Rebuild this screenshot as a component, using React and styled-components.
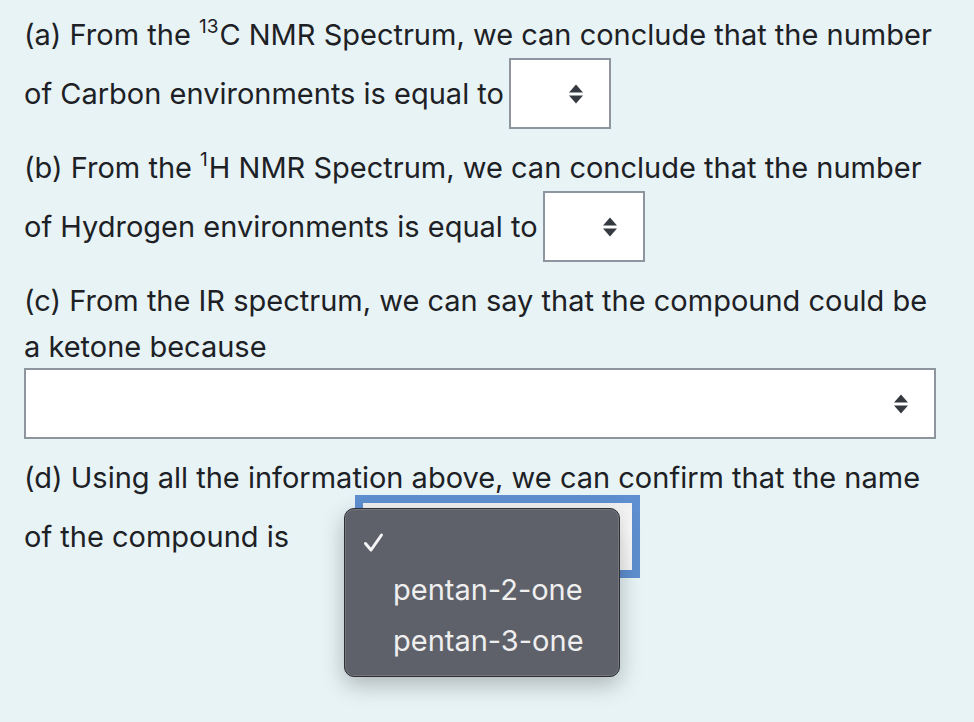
import styled, { createGlobalStyle } from "styled-components";

const GlobalStyle = createGlobalStyle`
  html, body {
    margin: 0;
    padding: 0;
    background: #e7f3f5;
  }
  * {
    box-sizing: border-box;
  }
`;

const Page = styled.div`
  min-height: 100vh;
  padding: 12px 30px 0 24px;
  background: #e7f3f5;
  color: #1d2125;
  font-family: Inter, "Noto Sans", "Liberation Sans", sans-serif;
  font-size: 29px;
`;

const Question = styled.div`
  margin-bottom: 16px;
`;

const Line = styled.div`
  position: relative;
  line-height: 46px;
  white-space: nowrap;
`;

const Sup = styled.sup`
  font-size: 19px;
  line-height: 0;
  vertical-align: 12px;
  margin-right: 1px;
`;

/* overflow hidden puts the inline-block baseline at its bottom edge */
const Combo = styled.div`
  display: ${(p) => (p.$block ? "block" : "inline-block")};
  overflow: hidden;
  vertical-align: -25px;
  width: ${(p) => (p.$block ? "912px" : `${p.$width}px`)};
  height: 71px;
  margin-left: ${(p) => p.$gap || 0}px;
  margin-top: ${(p) => (p.$block ? "-2px" : "0")};
  background: ${(p) =>
    p.$focused ? "linear-gradient(#f1f1f1, #fdfdfd 40%, #f6f6f6)" : "#fff"};
  border: 2px solid ${(p) => (p.$focused ? "#5f8fd0" : "#8f959e")};
  box-shadow: ${(p) => (p.$focused ? "0 0 0 6px #5f8fd0" : "none")};
`;

const Track = styled.div`
  display: flex;
  align-items: center;
  justify-content: flex-end;
  height: 100%;
  padding-right: 25px;
`;

const Arrows = styled.svg`
  display: block;
  width: 16px;
  height: 20px;
`;

const Menu = styled.div`
  position: absolute;
  left: 320px;
  top: 7px;
  width: 276px;
  padding: 9px 0 12px;
  background: #5e6169;
  border: 1px solid #2e2f33;
  border-radius: 10px;
  box-shadow: inset 0 0 0 1px rgba(255, 255, 255, 0.14),
    0 8px 22px rgba(0, 0, 0, 0.25);
  z-index: 5;
`;

const MenuItem = styled.div`
  display: flex;
  align-items: center;
  height: ${(p) => (p.$last ? 50 : 48)}px;
  padding-left: 48px;
  padding-top: ${(p) => (p.$last ? 4 : 0)}px;
  position: relative;
  color: #efeff0;
  font-size: 29px;
  line-height: 46px;
`;

const Check = styled.svg`
  position: absolute;
  left: 18px;
  top: 14px;
  width: 21px;
  height: 21px;
`;

const SelectArrows = () => (
  <Arrows viewBox="0 0 16 20">
    <polygon points="1,8.5 8,0.5 15,8.5" fill="#343a40" />
    <polygon points="1,11.5 15,11.5 8,19.5" fill="#343a40" />
  </Arrows>
);

const Select = ({ width, gap, block, focused }) => (
  <Combo $width={width} $gap={gap} $block={block} $focused={focused}>
    <Track>{!focused && <SelectArrows />}</Track>
  </Combo>
);

export default function App() {
  return (
    <>
      <GlobalStyle />
      <Page>
        <Question>
          <Line>
            (a) From the <Sup>13</Sup>C NMR Spectrum, we can conclude that the number
          </Line>
          <Line>
            of Carbon environments is equal to
            <Select width={102} gap={5} />
          </Line>
        </Question>

        <Question>
          <Line>
            (b) From the <Sup>1</Sup>H NMR Spectrum, we can conclude that the number
          </Line>
          <Line>
            of Hydrogen environments is equal to
            <Select width={102} gap={5} />
          </Line>
        </Question>

        <Question>
          <Line>(c) From the IR spectrum, we can say that the compound could be</Line>
          <Line>a ketone because</Line>
          <Select block />
        </Question>

        <Question>
          <Line>(d) Using all the information above, we can confirm that the name</Line>
          <Line>
            of the compound is
            <Select width={273} gap={72} focused />
            <Menu>
              <MenuItem>
                <Check viewBox="0 0 21 21">
                  <path
                    d="M2.5 11.5 L8 18 L18.5 3"
                    fill="none"
                    stroke="#f4f4f5"
                    strokeWidth="3"
                    strokeLinecap="round"
                    strokeLinejoin="round"
                  />
                </Check>
              </MenuItem>
              <MenuItem>pentan-2-one</MenuItem>
              <MenuItem $last>pentan-3-one</MenuItem>
            </Menu>
          </Line>
        </Question>
      </Page>
    </>
  );
}
